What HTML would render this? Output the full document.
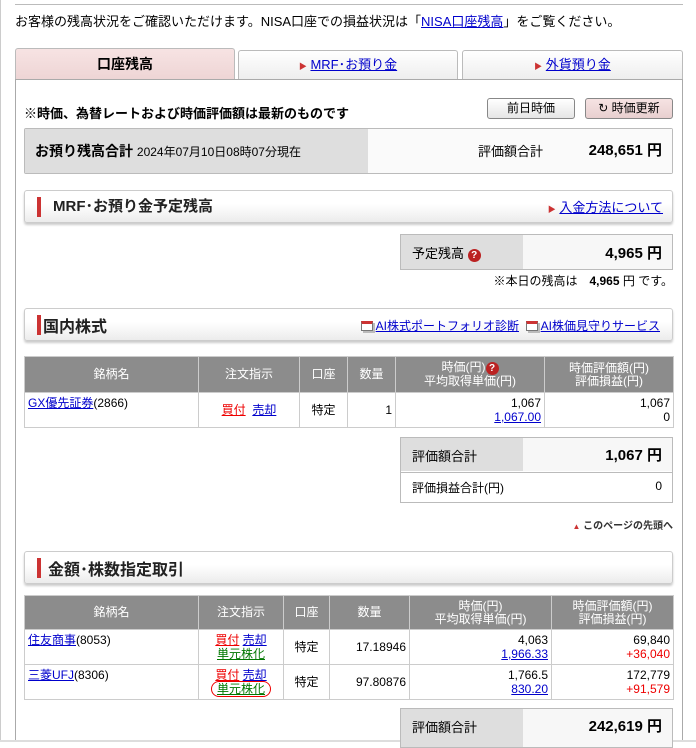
<!DOCTYPE html>
<html><head><meta charset="utf-8"><style>
*{margin:0;padding:0;box-sizing:border-box}
body{width:696px;height:742px;overflow:hidden;background:#fff;font-family:"Liberation Sans","Noto Sans CJK JP",sans-serif;font-size:12px;color:#000;position:relative}
.a{position:absolute}
a{color:#00c;text-decoration:underline}
.tab{position:absolute;border:1px solid #bbb;border-bottom:none;border-radius:3px 3px 0 0;text-align:center;font-size:13px;line-height:27px;background:linear-gradient(#fff,#eee)}
.hdr{position:absolute;left:24px;width:649px;height:33px;border:1px solid #ccc;border-radius:3px;background:linear-gradient(#fff 40%,#ececec);box-shadow:0 2px 2px #ccc}
.hdr .bar{position:absolute;left:12px;top:6px;width:4px;height:20px;background:#c33}
.hdr .t{position:absolute;left:28px;top:4px;font-size:15px;font-weight:bold;color:#222}
table{position:absolute;border-collapse:collapse;font-size:12px}
th{background:#8c8c8c;color:#fff;font-weight:normal;border:1px solid #ccc;line-height:13px}
td{border:1px solid #ccc;vertical-align:top;line-height:14px;padding:3px 3px}
.r{text-align:right}.c{text-align:center;vertical-align:middle}
.rm{text-align:right;vertical-align:middle}
.red{color:#e00}.grn{color:#070}
.box{position:absolute;border:1px solid #bbb}
.box .g{position:absolute;left:0;top:0;bottom:0;background:#dedede}
.box .w{position:absolute;right:0;top:0;bottom:0;background:#f7f7f7}
.btn{position:absolute;height:21px;border:1px solid #888;border-radius:3px;text-align:center;font-size:12px;line-height:19px}
.ic{display:inline-block;width:12px;height:10px;border:1px solid #777;border-top:3px solid #c33;background:#fff;vertical-align:-1px;margin-right:3px;box-shadow:2px 2px 0 #bbb}
.q{display:inline-block;width:13px;height:13px;border-radius:50%;background:#b22;color:#fff;font-size:10px;font-weight:bold;line-height:13px;text-align:center;vertical-align:0}
</style></head><body>
<div class="a" style="left:0;top:0;width:1px;height:742px;background:#ccc"></div>
<div class="a" style="left:15px;top:4px;width:668px;height:1px;background:#bbb"></div>
<div class="a" style="left:15px;top:11px;font-size:13px">お客様の残高状況をご確認いただけます。NISA口座での損益状況は「<a href="#">NISA口座残高</a>」をご覧ください。</div>

<div class="tab" style="left:15px;top:48px;width:220px;height:31px;background:linear-gradient(#f7e3e3,#eed5d5);font-weight:bold;font-size:14px;line-height:31px">口座残高</div>
<div class="tab" style="left:238px;top:50px;width:220px;height:29px"><span style="color:#c33;font-size:8px">▶</span> <a href="#">MRF･お預り金</a></div>
<div class="tab" style="left:462px;top:50px;width:221px;height:29px"><span style="color:#c33;font-size:8px">▶</span> <a href="#">外貨預り金</a></div>
<div class="a" style="left:15px;top:79px;width:668px;height:1px;background:#aaa"></div>
<div class="a" style="left:15px;top:79px;width:1px;height:663px;background:#aaa"></div>
<div class="a" style="left:682px;top:79px;width:1px;height:663px;background:#aaa"></div>
<div class="a" style="left:0;top:740px;width:696px;height:2px;background:#ddd"></div>

<div class="a" style="left:24px;top:103px;font-size:13px;font-weight:bold">※時価、為替レートおよび時価評価額は最新のものです</div>
<div class="btn" style="left:487px;top:98px;width:88px;background:linear-gradient(#fff,#e6e6e6)">前日時価</div>
<div class="btn" style="left:585px;top:98px;width:88px;background:linear-gradient(#f6e3e3,#e8cfcf)">↻ 時価更新</div>

<div class="box" style="left:24px;top:128px;width:649px;height:46px;border-radius:2px">
<div class="g" style="width:343px"></div><div class="w" style="left:343px;background:#fafafa"></div>
<div class="a" style="left:10px;top:12px;font-size:14px;font-weight:bold">お預り残高合計 <span style="font-weight:normal;font-size:12px">2024年07月10日08時07分現在</span></div>
<div class="a" style="left:453px;top:12px;font-size:13px">評価額合計</div>
<div class="a" style="right:10px;top:10px;font-size:15px;font-weight:bold">248,651 円</div>
</div>

<div class="hdr" style="top:190px"><div class="bar"></div><div class="t">MRF･お預り金予定残高</div>
<div class="a" style="right:9px;top:6px;font-size:13px"><span style="color:#c33;font-size:8px">▶</span> <a href="#">入金方法について</a></div></div>

<div class="box" style="left:400px;top:234px;width:273px;height:36px">
<div class="g" style="width:122px"></div><div class="w" style="left:122px"></div>
<div class="a" style="left:11px;top:8px;font-size:13px">予定残高 <span class="q">?</span></div>
<div class="a" style="right:10px;top:7px;font-size:15px;font-weight:bold">4,965 円</div></div>
<div class="a" style="right:23px;top:272px;font-size:12px">※本日の残高は　<b>4,965</b> 円 です。</div>

<div class="hdr" style="top:308px"><div class="bar"></div><div class="t" style="left:18px;font-size:16px">国内株式</div>
<div class="a" style="right:12px;top:8px;font-size:12px"><span class="ic"></span><a href="#">AI株式ポートフォリオ診断</a>&nbsp; <span class="ic"></span><a href="#">AI株価見守りサービス</a></div></div>

<table style="left:24px;top:356px;width:650px">
<tr style="height:36px"><th style="width:174px">銘柄名</th><th style="width:101px">注文指示</th><th style="width:48px">口座</th><th style="width:48px">数量</th><th style="width:149px">時価(円)<span class="q">?</span><br>平均取得単価(円)</th><th>時価評価額(円)<br>評価損益(円)</th></tr>
<tr style="height:34px"><td><a href="#">GX優先証券</a>(2866)</td><td class="c"><a href="#" class="red">買付</a>&nbsp; <a href="#">売却</a></td><td class="c">特定</td><td class="rm">1</td><td class="r">1,067<br><a href="#">1,067.00</a></td><td class="r">1,067<br>0</td></tr>
</table>

<div class="box" style="left:400px;top:437px;width:273px;height:66px">
<div class="g" style="width:122px;bottom:31px"></div><div class="w" style="left:122px;bottom:31px"></div>
<div class="a" style="left:0;right:0;top:34px;height:1px;background:#bbb"></div>
<div class="a" style="left:11px;top:8px;font-size:13px">評価額合計</div>
<div class="a" style="right:10px;top:6px;font-size:15px;font-weight:bold">1,067 円</div>
<div class="a" style="left:11px;top:41px;font-size:12px">評価損益合計(円)</div>
<div class="a" style="right:10px;top:41px;font-size:12px">0</div></div>

<div class="a" style="right:23px;top:517px;font-size:10px;font-weight:bold;color:#333"><span style="color:#c33;font-size:8px">▲</span> このページの先頭へ</div>

<div class="hdr" style="top:551px"><div class="bar"></div><div class="t" style="left:23px;font-size:16px">金額･株数指定取引</div></div>

<table style="left:24px;top:595px;width:650px">
<tr style="height:34px"><th style="width:174px">銘柄名</th><th style="width:85px">注文指示</th><th style="width:46px">口座</th><th style="width:80px">数量</th><th style="width:142px">時価(円)<br>平均取得単価(円)</th><th>時価評価額(円)<br>評価損益(円)</th></tr>
<tr style="height:35px"><td><a href="#">住友商事</a>(8053)</td><td class="c" style="line-height:14px"><a href="#" class="red">買付</a> <a href="#">売却</a><br><a href="#" class="grn">単元株化</a></td><td class="c">特定</td><td class="rm">17.18946</td><td class="r">4,063<br><a href="#">1,966.33</a></td><td class="r">69,840<br><span class="red">+36,040</span></td></tr>
<tr style="height:35px"><td><a href="#">三菱UFJ</a>(8306)</td><td class="c" style="line-height:14px"><a href="#" class="red">買付</a> <a href="#">売却</a><br><span style="border:1px solid #e00;border-radius:8px;padding:0 5px"><a href="#" class="grn">単元株化</a></span></td><td class="c">特定</td><td class="rm">97.80876</td><td class="r">1,766.5<br><a href="#">830.20</a></td><td class="r">172,779<br><span class="red">+91,579</span></td></tr>
</table>

<div class="box" style="left:400px;top:708px;width:273px;height:40px">
<div class="g" style="width:122px"></div><div class="w" style="left:122px"></div>
<div class="a" style="left:11px;top:8px;font-size:13px">評価額合計</div>
<div class="a" style="right:10px;top:6px;font-size:15px;font-weight:bold">242,619 円</div></div>
</body></html>
